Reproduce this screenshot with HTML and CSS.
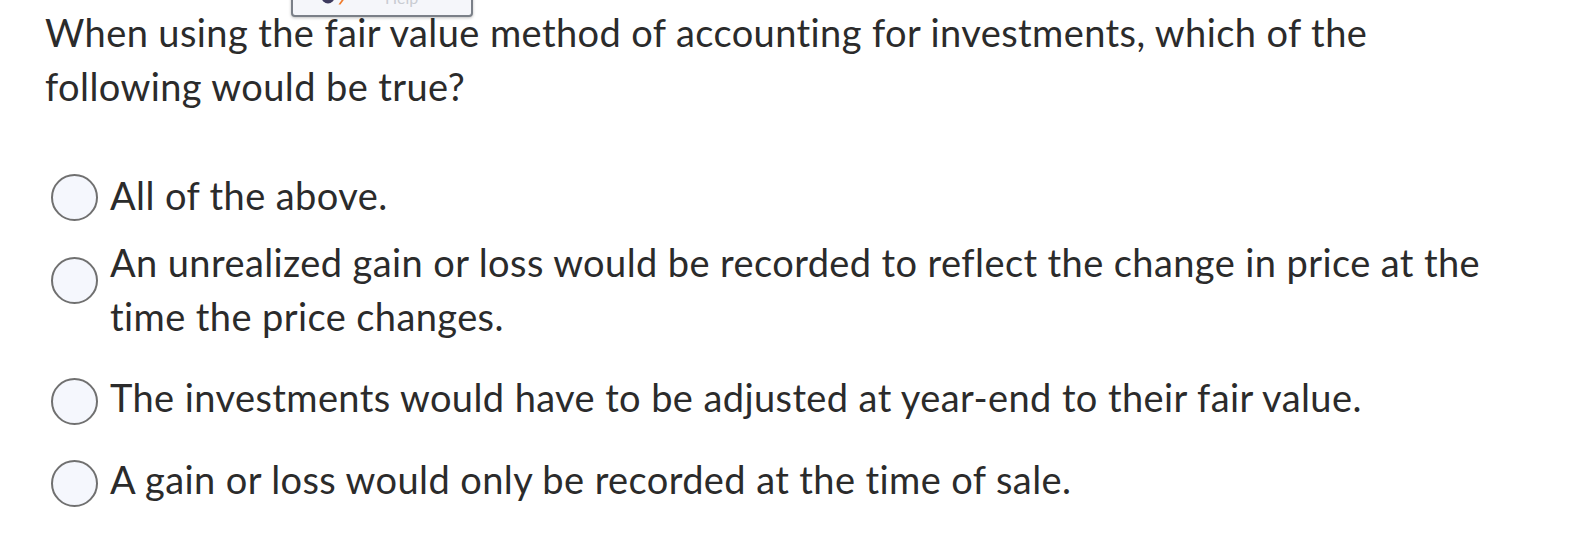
FILE: index.html
```html
<!DOCTYPE html>
<html lang="en">
<head>
<meta charset="utf-8">
<title>Question</title>
<link rel="stylesheet" href="styles.css">
</head>
<body>
<div class="page">
  <div class="badge">
    <svg class="badge-icon" width="24" height="12" viewBox="0 0 24 12">
      <circle cx="7" cy="4" r="6.5" fill="#3d3a5e"/>
      <path d="M17.5 11.5 L22 5 L23.5 6 L19.5 11.5 Z" fill="#f07a2a"/>
    </svg>
    <span class="badge-text">Help</span>
  </div>
  <p class="question">When using the fair value method of accounting for investments, which of the following would be true?</p>
  <ul class="options">
    <li class="option option-first"><span class="radio"></span><span class="label">All of the above.</span></li>
    <li class="option option-multi"><span class="radio"></span><span class="label">An unrealized gain or loss would be recorded to reflect the change in price at the time the price changes.</span></li>
    <li class="option"><span class="radio"></span><span class="label">The investments would have to be adjusted at year-end to their fair value.</span></li>
    <li class="option"><span class="radio"></span><span class="label">A gain or loss would only be recorded at the time of sale.</span></li>
  </ul>
</div>
</body>
</html>
```
FILE: styles.css
```css
html, body {
  margin: 0;
  padding: 0;
  background: #ffffff;
}
body {
  font-family: Lato, "Noto Sans", sans-serif;
  color: #2b2b2b;
  width: 1582px;
  height: 558px;
  overflow: hidden;
}
.page {
  position: relative;
  padding: 5px 0 0 45px;
}
.badge {
  position: absolute;
  left: 291px;
  top: -20px;
  width: 150px;
  height: 33px;
  border: 2px solid #7b8088;
  border-radius: 4px;
  background: #f5f6fa;
  box-shadow: 0 1px 3px rgba(0,0,0,0.25);
  display: flex;
  align-items: flex-end;
  gap: 40px;
  padding-left: 28px;
  box-sizing: content-box;
  overflow: hidden;
}
.badge-icon {
  display: block;
  margin-bottom: 10px;
}
.badge-text {
  color: #c9ccd2;
  font-size: 16px;
  line-height: 16px;
  margin-bottom: 9px;
}
.question {
  margin: 0;
  font-size: 38px;
  letter-spacing: 0.4px;
  line-height: 54px;
  width: 1400px;
}
.options {
  list-style: none;
  margin: 55px 0 0 6px;
  padding: 0;
}
.option {
  display: flex;
  align-items: flex-start;
  gap: 12px;
  font-size: 38px;
  letter-spacing: 0.4px;
  line-height: 54px;
  margin-bottom: 27px;
}
.option-first {
  margin-bottom: 13px;
}
.radio {
  flex: none;
  width: 43px;
  height: 43px;
  border: 2px solid #707070;
  border-radius: 50%;
  background: #f5f7fd;
  margin-top: 8px;
}
.option-first .radio {
  margin-top: 6px;
}
.option-multi .radio {
  margin-top: 22px;
}
.label {
  width: 1390px;
}
```
